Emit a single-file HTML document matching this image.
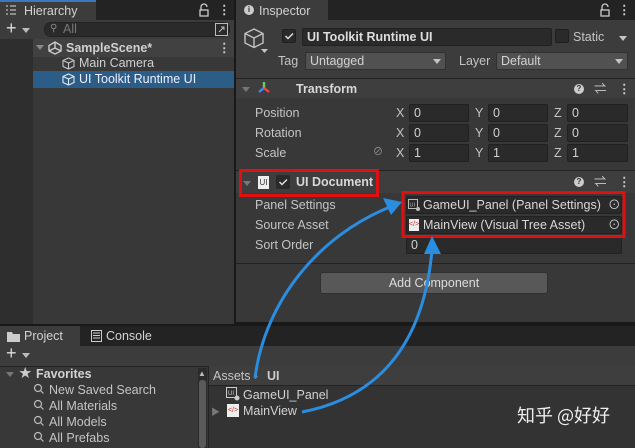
<!DOCTYPE html>
<html><head><meta charset="utf-8">
<style>
*{margin:0;padding:0;box-sizing:border-box}
body{width:635px;height:448px;overflow:hidden;background:#191919;font-family:"Liberation Sans","Noto Sans CJK SC",sans-serif;font-size:12.5px;color:#c4c4c4;position:relative}
.a{position:absolute}
.t{position:absolute;white-space:nowrap;line-height:16px}
.fld{position:absolute;background:#2a2a2a;border:1px solid #212121;border-radius:2px;height:18px;color:#d2d2d2;padding-left:4px;line-height:16px}
.dd{position:absolute;background:#515151;border:1px solid #303030;border-radius:2px;height:18px;color:#d2d2d2;padding-left:4px;line-height:16px}
.tri{position:absolute;width:0;height:0;border-left:4px solid transparent;border-right:4px solid transparent;border-top:5px solid #c4c4c4}
.sep{position:absolute;height:1px;background:#232323}
</style></head><body>

<!-- Hierarchy -->
<div class="a" style="left:0;top:0;width:234px;height:20px;background:#232323"></div>
<div class="a" style="left:0;top:0;width:96px;height:20px;background:#3c3c3c;border-top:2px solid #3a79bb"></div>
<svg class="a" style="left:6px;top:5px" width="10" height="10"><path d="M0 1h2M4 1h6M0 5h2M4 5h6M0 9h2M4 9h6" stroke="#bbb" stroke-width="1.2"/></svg>
<div class="t" style="left:24px;top:3px;color:#d2d2d2">Hierarchy</div>
<svg class="a" style="left:198px;top:3px" width="12" height="14"><path d="M3 7V4a3 3 0 0 1 6 0" stroke="#ccc" fill="none" stroke-width="1.3"/><rect x="2" y="7" width="8" height="6" fill="none" stroke="#ccc" stroke-width="1.3"/></svg>
<div class="t" style="left:218px;top:2px;color:#ccc;font-weight:bold">⋮</div>
<div class="a" style="left:0;top:20px;width:234px;height:19px;background:#3c3c3c"></div>
<div class="t" style="left:6px;top:20px;font-size:18px;color:#ddd">+</div>
<div class="tri" style="left:22px;top:28px;border-top-color:#bbb"></div>
<div class="a" style="left:44px;top:22px;width:186px;height:15px;background:#2a2a2a;border-radius:7px;border:1px solid #222"></div>
<div class="t" style="left:50px;top:21px;color:#888;font-size:10px">⚲</div>
<div class="t" style="left:63px;top:21px;color:#777">All</div>
<svg class="a" style="left:215px;top:23px" width="13" height="13"><rect x="0.5" y="0.5" width="12" height="12" fill="none" stroke="#bbb"/><path d="M4 9l5-5M6 4h3v3" stroke="#bbb" fill="none"/></svg>
<div class="a" style="left:0;top:39px;width:234px;height:285px;background:#383838"></div>
<div class="a" style="left:0;top:39px;width:33px;height:285px;background:#2e2e2e"></div>
<div class="a" style="left:33px;top:39px;width:201px;height:18px;background:#414141"></div>
<div class="tri" style="left:36px;top:45px;border-top-color:#888"></div>
<svg class="a" style="left:48px;top:41px" width="14" height="14"><path d="M7 1L13 4.5V10L7 13 1 10V4.5Z M7 1V7L1 10M7 7l6 3" fill="none" stroke="#ccc" stroke-width="1.4"/></svg>
<div class="t" style="left:66px;top:40px;font-weight:bold;color:#d0d0d0">SampleScene*</div>
<div class="t" style="left:218px;top:40px;color:#ccc;font-weight:bold">⋮</div>
<svg class="a" style="left:62px;top:57px" width="13" height="13"><path d="M6.5 1L12 3.5V9.5L6.5 12 1 9.5V3.5Z M1 3.5L6.5 6 12 3.5M6.5 6V12" fill="none" stroke="#c4c4c4" stroke-width="1.1"/></svg>
<div class="t" style="left:79px;top:55px;color:#d0d0d0">Main Camera</div>
<div class="a" style="left:33px;top:71px;width:201px;height:17px;background:#2c5d87"></div>
<svg class="a" style="left:62px;top:73px" width="13" height="13"><path d="M6.5 1L12 3.5V9.5L6.5 12 1 9.5V3.5Z M1 3.5L6.5 6 12 3.5M6.5 6V12" fill="none" stroke="#e0e8f0" stroke-width="1.1"/></svg>
<div class="t" style="left:79px;top:71px;color:#eef">UI Toolkit Runtime UI</div>

<!-- Inspector -->
<div class="a" style="left:236px;top:0;width:399px;height:20px;background:#232323"></div>
<div class="a" style="left:236px;top:0;width:92px;height:20px;background:#3c3c3c"></div>
<div class="a" style="left:244px;top:5px;width:10px;height:10px;border-radius:50%;background:#ccc;color:#333;font-size:8px;font-weight:bold;text-align:center;line-height:10px">i</div>
<div class="t" style="left:259px;top:3px;color:#d2d2d2">Inspector</div>
<svg class="a" style="left:599px;top:3px" width="12" height="14"><path d="M3 7V4a3 3 0 0 1 6 0" stroke="#ccc" fill="none" stroke-width="1.3"/><rect x="2" y="7" width="8" height="6" fill="none" stroke="#ccc" stroke-width="1.3"/></svg>
<div class="t" style="left:618px;top:2px;color:#ccc;font-weight:bold">⋮</div>
<div class="a" style="left:236px;top:20px;width:399px;height:302px;background:#383838"></div>
<div class="a" style="left:236px;top:20px;width:399px;height:58px;background:#3c3c3c"></div>
<svg class="a" style="left:243px;top:27px" width="26" height="28"><path d="M11 2L20 6.5V16L11 20.5 2 16V6.5Z M2 6.5L11 11 20 6.5M11 11V20.5" fill="none" stroke="#c4c4c4" stroke-width="1.4"/><path d="M18 22h7l-3.5 4z" fill="#c4c4c4"/></svg>
<div class="a" style="left:282px;top:29px;width:14px;height:14px;background:#2a2a2a;border:1px solid #1e1e1e;border-radius:2px"></div>
<svg class="a" style="left:284px;top:31px" width="10" height="10"><path d="M1.5 5l2.5 2.5 5-5" fill="none" stroke="#ddd" stroke-width="1.5"/></svg>
<div class="fld" style="left:302px;top:28px;width:250px;font-weight:bold;color:#ddd">UI Toolkit Runtime UI</div>
<div class="a" style="left:555px;top:29px;width:14px;height:14px;background:#2a2a2a;border:1px solid #1e1e1e;border-radius:2px"></div>
<div class="t" style="left:573px;top:29px">Static</div>
<div class="tri" style="left:619px;top:36px"></div>
<div class="t" style="left:278px;top:53px">Tag</div>
<div class="dd" style="left:305px;top:52px;width:141px">Untagged</div>
<div class="tri" style="left:433px;top:59px"></div>
<div class="t" style="left:459px;top:53px">Layer</div>
<div class="dd" style="left:496px;top:52px;width:132px">Default</div>
<div class="tri" style="left:615px;top:59px"></div>
<div class="sep" style="left:236px;top:78px;width:399px"></div>
<div class="a" style="left:236px;top:79px;width:399px;height:19px;background:#3e3e3e"></div>
<div class="tri" style="left:242px;top:87px;border-top-color:#777"></div>
<svg class="a" style="left:256px;top:80px" width="16" height="16"><path d="M8 2v6" stroke="#6c6" stroke-width="2.4"/><path d="M8 8l-5 4" stroke="#48f" stroke-width="2.4"/><path d="M8 8l5 4" stroke="#e44" stroke-width="2.4"/></svg>
<div class="t" style="left:296px;top:81px;font-weight:bold;color:#d8d8d8">Transform</div>
<div class="a" style="left:574px;top:84px;width:10px;height:10px;border-radius:50%;background:#ccc;color:#333;font-size:8px;font-weight:bold;text-align:center;line-height:10px">?</div>
<div class="t" style="left:594px;top:81px;color:#ccc">⇌</div>
<div class="t" style="left:618px;top:81px;color:#ccc;font-weight:bold">⋮</div>
<div class="t" style="left:255px;top:105px">Position</div>
<div class="t" style="left:255px;top:125px">Rotation</div>
<div class="t" style="left:255px;top:145px">Scale</div>
<div class="t" style="left:373px;top:145px;font-size:10px;color:#999">⊘</div>
<div class="t" style="left:396px;top:105px">X</div><div class="fld" style="left:409px;top:104px;width:60px">0</div>
<div class="t" style="left:475px;top:105px">Y</div><div class="fld" style="left:488px;top:104px;width:60px">0</div>
<div class="t" style="left:554px;top:105px">Z</div><div class="fld" style="left:567px;top:104px;width:61px">0</div>
<div class="t" style="left:396px;top:125px">X</div><div class="fld" style="left:409px;top:124px;width:60px">0</div>
<div class="t" style="left:475px;top:125px">Y</div><div class="fld" style="left:488px;top:124px;width:60px">0</div>
<div class="t" style="left:554px;top:125px">Z</div><div class="fld" style="left:567px;top:124px;width:61px">0</div>
<div class="t" style="left:396px;top:145px">X</div><div class="fld" style="left:409px;top:144px;width:60px">1</div>
<div class="t" style="left:475px;top:145px">Y</div><div class="fld" style="left:488px;top:144px;width:60px">1</div>
<div class="t" style="left:554px;top:145px">Z</div><div class="fld" style="left:567px;top:144px;width:61px">1</div>
<div class="sep" style="left:236px;top:170px;width:399px"></div>
<div class="a" style="left:236px;top:171px;width:399px;height:22px;background:#3e3e3e"></div>
<div class="tri" style="left:243px;top:181px;border-top-color:#777"></div>
<div class="a" style="left:258px;top:176px;width:11px;height:13px;background:#eee;color:#333;font-size:8px;text-align:center;line-height:13px">UI</div>
<div class="a" style="left:276px;top:175px;width:14px;height:14px;background:#2a2a2a;border-radius:2px"></div>
<svg class="a" style="left:278px;top:177px" width="10" height="10"><path d="M1.5 5l2.5 2.5 5-5" fill="none" stroke="#ddd" stroke-width="1.5"/></svg>
<div class="t" style="left:296px;top:174px;font-weight:bold;color:#d8d8d8">UI Document</div>
<div class="a" style="left:574px;top:177px;width:10px;height:10px;border-radius:50%;background:#ccc;color:#333;font-size:8px;font-weight:bold;text-align:center;line-height:10px">?</div>
<div class="t" style="left:594px;top:174px;color:#ccc">⇌</div>
<div class="t" style="left:618px;top:174px;color:#ccc;font-weight:bold">⋮</div>
<div class="t" style="left:255px;top:197px">Panel Settings</div>
<div class="t" style="left:255px;top:217px">Source Asset</div>
<div class="t" style="left:255px;top:237px">Sort Order</div>
<div class="fld" style="left:406px;top:196px;width:216px;padding-left:16px;color:#d8d8d8">GameUI_Panel (Panel Settings)</div>
<svg class="a" style="left:408px;top:199px" width="12" height="12"><rect x="0.5" y="0.5" width="9" height="9" fill="none" stroke="#bbb"/><text x="1.5" y="7.5" font-size="5.5" fill="#bbb" font-family="Liberation Sans">UI</text><circle cx="10" cy="10" r="2" fill="#bbb"/></svg>
<div class="fld" style="left:406px;top:216px;width:216px;padding-left:16px;color:#d8d8d8">MainView (Visual Tree Asset)</div>
<div class="a" style="left:409px;top:219px;width:10px;height:12px;background:#eee;color:#c33;font-size:7px;line-height:12px;text-align:center">&lt;/&gt;</div>
<div class="t" style="left:608px;top:197px;color:#ccc">⊙</div>
<div class="t" style="left:608px;top:217px;color:#ccc">⊙</div>
<div class="fld" style="left:406px;top:236px;width:216px">0</div>
<div class="sep" style="left:236px;top:263px;width:399px"></div>
<div class="a" style="left:320px;top:272px;width:228px;height:22px;background:#585858;border:1px solid #303030;border-radius:3px;color:#ddd;text-align:center;line-height:20px">Add Component</div>
<div class="a" style="left:234px;top:0;width:2px;height:324px;background:#191919"></div>

<!-- Project -->
<div class="a" style="left:0;top:326px;width:635px;height:20px;background:#232323"></div>
<div class="a" style="left:0;top:326px;width:80px;height:20px;background:#3c3c3c"></div>
<svg class="a" style="left:7px;top:331px" width="13" height="11"><path d="M0 1h5l1 2h7v8H0z" fill="#ccc"/></svg>
<div class="t" style="left:24px;top:328px;color:#d2d2d2">Project</div>
<svg class="a" style="left:91px;top:330px" width="11" height="12"><rect x="0.5" y="0.5" width="10" height="11" fill="none" stroke="#ccc"/><path d="M2 3h7M2 5.5h7M2 8h7" stroke="#ccc"/></svg>
<div class="t" style="left:106px;top:328px;color:#d2d2d2">Console</div>
<div class="a" style="left:0;top:346px;width:635px;height:20px;background:#3c3c3c"></div>
<div class="t" style="left:6px;top:345px;font-size:18px;color:#ddd">+</div>
<div class="tri" style="left:22px;top:353px;border-top-color:#bbb"></div>
<div class="a" style="left:0;top:366px;width:208px;height:82px;background:#383838;border-top:1px solid #232323"></div>
<div class="a" style="left:198px;top:368px;width:9px;height:80px;background:#2b2b2b"></div>
<div class="a" style="left:199px;top:380px;width:7px;height:68px;background:#5a5a5a;border-radius:3px"></div>
<div class="t" style="left:198px;top:366px;font-size:8px;color:#bbb">▲</div>
<div class="tri" style="left:6px;top:372px;border-top-color:#777"></div>
<div class="t" style="left:19px;top:365px;color:#ccc">★</div>
<div class="t" style="left:36px;top:366px;font-weight:bold;color:#d2d2d2">Favorites</div>
<svg class="a" style="left:33px;top:383px;" width="12" height="62"><g fill="none" stroke="#bbb" stroke-width="1.2"><circle cx="5" cy="5" r="3.5"/><path d="M7.5 7.5l3 3"/><circle cx="5" cy="21" r="3.5"/><path d="M7.5 23.5l3 3"/><circle cx="5" cy="37" r="3.5"/><path d="M7.5 39.5l3 3"/><circle cx="5" cy="53" r="3.5"/><path d="M7.5 55.5l3 3"/></g></svg>
<div class="t" style="left:49px;top:382px">New Saved Search</div>
<div class="t" style="left:49px;top:398px">All Materials</div>
<div class="t" style="left:49px;top:414px">All Models</div>
<div class="t" style="left:49px;top:430px">All Prefabs</div>
<div class="a" style="left:208px;top:366px;width:427px;height:82px;background:#333333;border-left:1px solid #232323"></div>
<div class="a" style="left:209px;top:366px;width:426px;height:20px;background:#3e3e3e;border-bottom:1px solid #232323"></div>
<div class="t" style="left:213px;top:368px">Assets</div>
<div class="t" style="left:254px;top:368px;color:#888">›</div>
<div class="t" style="left:267px;top:368px;font-weight:bold;color:#ccc">UI</div>
<svg class="a" style="left:226px;top:387px" width="14" height="14"><rect x="0.5" y="0.5" width="10" height="10" fill="none" stroke="#ccc"/><text x="2" y="8" font-size="6" fill="#ccc" font-family="Liberation Sans">UI</text><circle cx="11" cy="11" r="2.5" fill="#ccc"/></svg>
<div class="t" style="left:243px;top:387px;color:#d2d2d2">GameUI_Panel</div>
<div class="t" style="left:211px;top:404px;font-size:9px;color:#777">▶</div>
<div class="a" style="left:227px;top:404px;width:12px;height:13px;background:#eee;color:#c33;font-size:7px;line-height:13px;text-align:center">&lt;/&gt;</div>
<div class="t" style="left:243px;top:403px;color:#d2d2d2">MainView</div>
<div class="t" style="left:517px;top:404px;font-size:18px;line-height:22px;color:#eee;font-family:'Noto Sans CJK SC',sans-serif">知乎 @好好</div>

<!-- overlays -->
<svg class="a" style="left:0;top:0" width="635" height="448">
<rect x="240.5" y="170.5" width="137" height="25" fill="none" stroke="#e01010" stroke-width="3"/>
<rect x="403" y="192.5" width="221" height="44" fill="none" stroke="#e01010" stroke-width="3"/>
<path d="M255 378 C265 300 320 235 390 207" fill="none" stroke="#2a8de0" stroke-width="3"/>
<path d="M402 202 L383 198 L391 215 Z" fill="#2a8de0"/>
<path d="M302 412 C390 395 425 330 432 250" fill="none" stroke="#2a8de0" stroke-width="3"/>
<path d="M432 236 L424 254 L441 254 Z" fill="#2a8de0"/>
</svg>
</body></html>
